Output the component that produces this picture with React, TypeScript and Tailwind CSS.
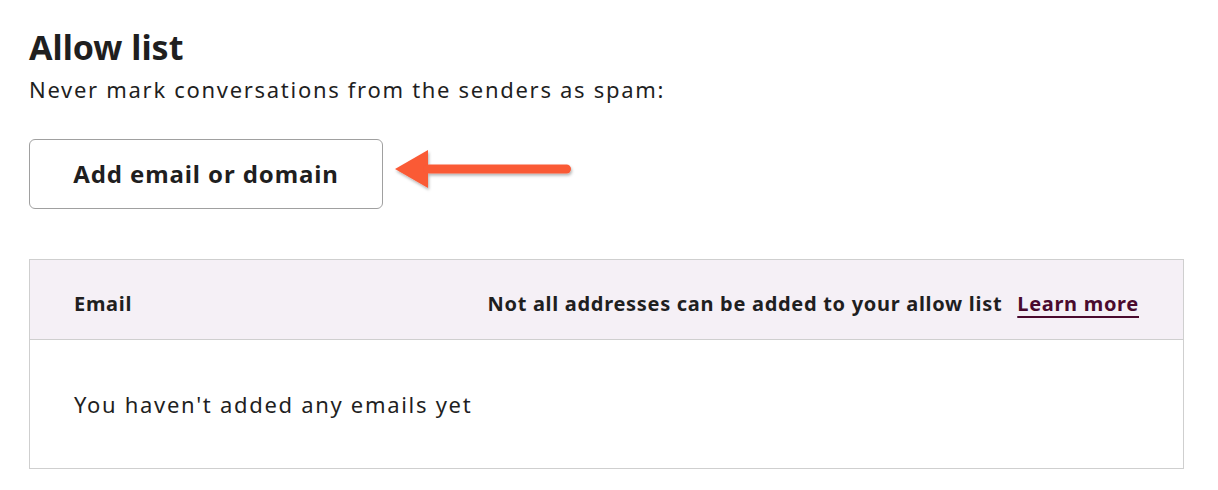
import React from 'react';

function ArrowPointer() {
  return (
    <svg width="190" height="50" viewBox="0 0 190 50" className="mb-[10px] ml-[10px] overflow-visible">
      <defs>
        <filter id="arrowShadow" x="-10%" y="-30%" width="120%" height="160%">
          <feDropShadow dx="1" dy="2" stdDeviation="1.5" floodColor="#000" floodOpacity="0.3" />
        </filter>
      </defs>
      <g filter="url(#arrowShadow)" fill="#fa5a36">
        <path d="M2 25 L35 6 L35 44 Z" />
        <rect x="30" y="20.5" width="148" height="9" rx="4.5" />
      </g>
    </svg>
  );
}

export default function App() {
  return (
    <div className="min-h-screen bg-white px-[29px] pt-[26px] text-[#1f1f1f] font-['Noto_Sans','Liberation_Sans',sans-serif]">
      <h1 className="text-[34px] font-bold leading-[42px]">Allow list</h1>
      <p className="mt-[6px] text-[22px] leading-[30px] tracking-[1.7px]">
        Never mark conversations from the senders as spam:
      </p>

      <div className="mt-[35px] flex items-center">
        <button
          type="button"
          className="flex h-[70px] w-[354px] items-center justify-center rounded-[6px] border border-[#a0a0a0] bg-white text-[24px] font-bold tracking-[0.9px]"
        >
          Add email or domain
        </button>
        <ArrowPointer />
      </div>

      <div className="mt-[50px] w-[1155px] border border-[#cfcfcf]">
        <div className="flex h-[80px] items-center justify-between border-b border-[#cfcfcf] bg-[#f5f0f6] px-[44px] pt-[8px] text-[20px] font-bold tracking-[0.7px]">
          <span>Email</span>
          <span>
            Not all addresses can be added to your allow list
            <a
              href="#"
              className="ml-[15px] text-[#4a0a2e] underline decoration-[2px] underline-offset-[5px]"
            >
              Learn more
            </a>
          </span>
        </div>
        <div className="flex h-[128px] items-center px-[44px] text-[22px] tracking-[1.7px]">
          You haven't added any emails yet
        </div>
      </div>
    </div>
  );
}
